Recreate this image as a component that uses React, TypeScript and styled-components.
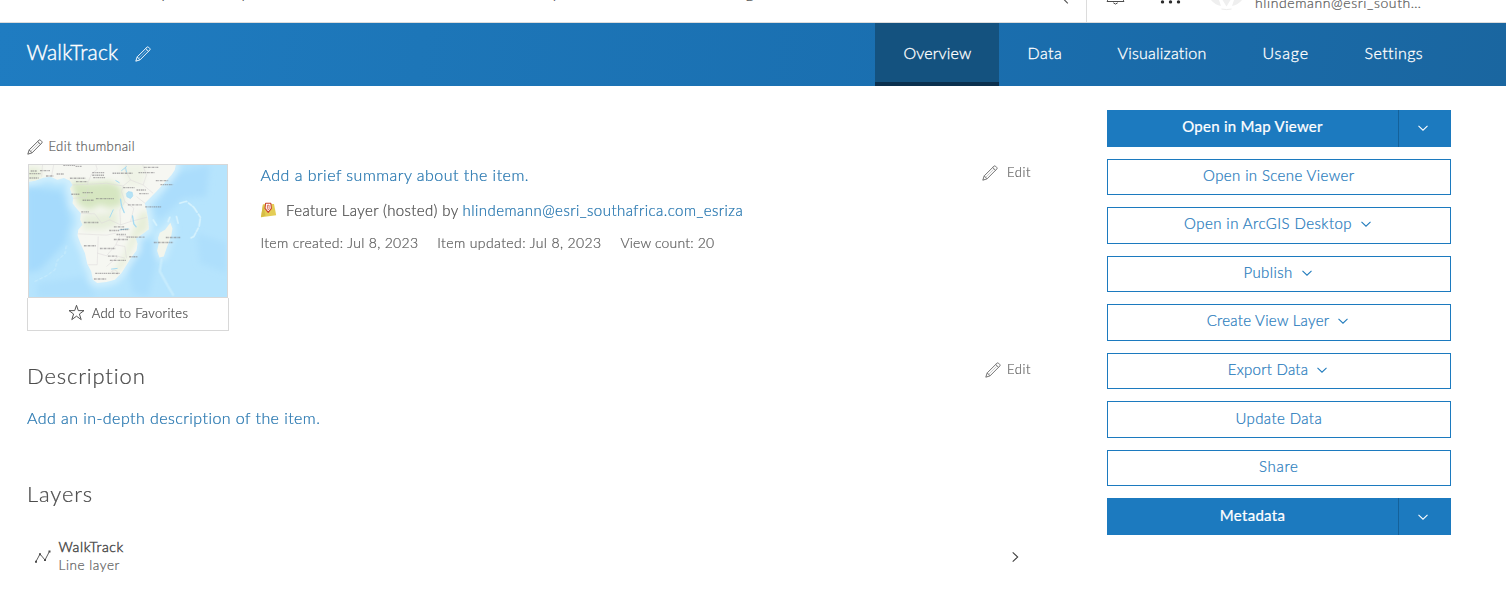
import React from "react";
import styled, { createGlobalStyle, css } from "styled-components";

const GlobalStyle = createGlobalStyle`
  *, *::before, *::after { box-sizing: border-box; }
  body {
    margin: 0;
    background: #fff;
    color: #4c4c4c;
    font-family: Lato, "Open Sans", sans-serif;
    font-weight: 300;
    -webkit-text-stroke: 0.22px currentColor;
    overflow: hidden;
  }
  svg { display: block; flex: none; }
`;

type Tracked = { $track?: number };
const tracking = css<Tracked>`
  letter-spacing: ${(p) => p.$track ?? 0.4}px;
  white-space: nowrap;
`;

/* ---------- global bar ---------- */
const Page = styled.div`
  width: 1506px;
  height: 594px;
  overflow: hidden;
`;
const GlobalBar = styled.header`
  display: flex;
  height: 23px;
  border-bottom: 1px solid #dcdcdc;
  overflow: hidden;
`;
const GlobalNav = styled.nav`
  display: flex;
  width: 1040px;
  height: 20px;
  margin-top: -16px;
  padding-left: 25px;
  line-height: 16px;
`;
const GlobalLink = styled.a<{ $width: number }>`
  flex: none;
  width: ${(p) => p.$width}px;
  font-size: 16px;
  color: #4c4c4c;
  letter-spacing: 0.3px;
`;
const SearchSlot = styled.div`
  width: 47px;
  height: 22px;
  padding-left: 21px;
  border-right: 1px solid #dcdcdc;
`;
const GlobalTools = styled.div`
  display: flex;
  align-items: flex-start;
  padding-left: 19px;
`;
const BellSlot = styled.div`width: 54px;`;
const DotsSlot = styled.div`width: 51px;`;
const AvatarSlot = styled.div`width: 44px;`;
const UserName = styled.span<Tracked>`
  ${tracking}
  margin-top: -7px;
  font-size: 14px;
  line-height: 20px;
  color: #595959;
`;

/* ---------- item header ---------- */
const ItemHeader = styled.div`
  display: flex;
  justify-content: space-between;
  height: 63px;
  padding: 0 55px 0 26.5px;
  color: #fff;
  background: linear-gradient(100deg, #1f7cc1 0%, #1d76b8 28%, #1a6fb0 60%, #1a66a0 100%);
`;
const TitleGroup = styled.div`
  display: flex;
  align-items: center;
  gap: 16.5px;
  height: 57px;
`;
const Title = styled.h1<Tracked>`
  ${tracking}
  margin: 0;
  font-size: 21px;
  font-weight: 300;
  line-height: 28px;
  -webkit-text-stroke-width: 0.4px;
`;
const PencilDrop = styled.span`padding-top: 5px;`;
const Tabs = styled.nav`display: flex;`;
const Tab = styled.a<Tracked & { $width: number; $active?: boolean }>`
  ${tracking}
  width: ${(p) => p.$width}px;
  padding-left: 28.5px;
  font-size: 16px;
  line-height: 59px;
  -webkit-text-stroke-width: 0.3px;
  ${(p) => p.$active && css`
    background: #14527f;
    border-bottom: 4px solid #0b304e;
  `}
`;

/* ---------- body ---------- */
const Body = styled.main`
  display: flex;
  justify-content: space-between;
  padding: 24px 55px 0 27px;
`;
const Content = styled.div`width: 1004px;`;
const Summary = styled.section`
  display: flex;
  padding-top: 28px;
`;
const ThumbColumn = styled.div`width: 202px;`;
const EditThumb = styled.a`
  display: flex;
  align-items: center;
  gap: 5.5px;
  height: 18px;
  margin-bottom: 8px;
  color: #5f5f5f;
`;
const SmallLabel = styled.span<Tracked>`
  ${tracking}
  font-size: 13px;
  line-height: 16px;
  padding-bottom: 2px;
`;
const ThumbFrame = styled.div`
  width: 200px;
  height: 134px;
  margin-left: 1px;
  border: 1px solid #d8d8d8;
  overflow: hidden;
`;
const Favorite = styled.button`
  display: flex;
  align-items: center;
  justify-content: center;
  gap: 7px;
  width: 202px;
  height: 33px;
  padding: 0 0 3px 0;
  border: 1px solid #d8d8d8;
  border-top: 0;
  background: #fff;
  color: #4c4c4c;
  font-family: inherit;
  font-weight: 300;
  svg { margin-bottom: 1px; }
  span { padding-bottom: 0; }
`;
const Details = styled.div`
  flex: 1;
  padding: 20px 0 0 31.5px;
`;
const linkColor = "#2374ae";
const SummaryPrompt = styled.a<Tracked>`
  ${tracking}
  display: block;
  font-size: 16px;
  line-height: 34px;
  color: ${linkColor};
`;
const TypeRow = styled.div<Tracked>`
  ${tracking}
  display: flex;
  align-items: center;
  height: 35px;
  margin-left: -1px;
  font-size: 15px;
`;
const TypeText = styled.span`margin: 0 4px 0 9.5px;`;
const OwnerLink = styled.a<Tracked>`
  ${tracking}
  color: ${linkColor};
`;
const MetaRow = styled.div`
  display: flex;
  gap: 18.8px;
  font-size: 14px;
  line-height: 31px;
  color: #5f5f5f;
`;
const MetaItem = styled.span<Tracked>`${tracking}`;
const EditLink = styled.a<{ $gap: number }>`
  display: flex;
  align-items: center;
  gap: ${(p) => p.$gap}px;
  height: 18px;
  color: #6a6a6a;
`;
const DetailsEdit = styled.div`padding-top: 26px;`;
const SectionHead = styled.div<{ $top: number }>`
  display: flex;
  justify-content: space-between;
  align-items: center;
  height: 30px;
  margin-top: ${(p) => p.$top}px;
`;
const SectionTitle = styled.h2<Tracked>`
  ${tracking}
  margin: 0;
  font-size: 22px;
  font-weight: 300;
  line-height: 30px;
`;
const HeadEdit = styled.div`margin-top: -12px;`;
const DescriptionPrompt = styled.a<Tracked>`
  ${tracking}
  display: block;
  margin-top: 16px;
  font-size: 16px;
  line-height: 22px;
  color: ${linkColor};
`;
const LayerRow = styled.div`
  display: flex;
  align-items: center;
  margin-top: 29px;
  padding: 0 12px 0 7px;
  svg { margin-top: 2px; }
`;
const LayerText = styled.div`
  flex: 1;
  padding-left: 7.5px;
  line-height: 18px;
`;
const LayerName = styled.div<Tracked>`
  ${tracking}
  font-size: 14px;
  -webkit-text-stroke-width: 0.45px;
`;
const LayerKind = styled.div<Tracked>`
  ${tracking}
  font-size: 13.5px;
  color: #5f5f5f;
`;

/* ---------- action column ---------- */
const Actions = styled.aside`
  display: flex;
  flex-direction: column;
  gap: 12px;
  width: 344px;
`;
const Action = styled.button<Tracked & { $menu?: boolean }>`
  ${tracking}
  display: flex;
  align-items: center;
  justify-content: center;
  gap: 8px;
  height: 36.55px;
  padding: 0 ${(p) => (p.$menu ? 2 : 0.5)}px 4px 0;
  border: 1px solid #1c7abf;
  background: #fff;
  color: #1f7abc;
  font-family: inherit;
  font-weight: 300;
  font-size: 15px;
  svg { margin-top: 2px; }
`;
const SplitAction = styled.div`
  display: flex;
  height: 36.55px;
  background: #1c7abf;
  color: #fff;
`;
const SplitMain = styled.button<Tracked>`
  ${tracking}
  width: 291px;
  padding: 0 0 4px;
  border: 0;
  background: none;
  color: inherit;
  font-family: inherit;
  font-weight: 400;
  font-size: 15px;
`;
const SplitMenu = styled.button`
  display: flex;
  align-items: center;
  justify-content: center;
  width: 53px;
  padding: 0 4px 0 0;
  border: 0;
  border-left: 1px solid #14619a;
  background: none;
  color: inherit;
`;

/* ---------- drawings ---------- */
const Pencil = () => (
  <svg width="16" height="16" viewBox="0 0 16 16" fill="none" stroke="currentColor" strokeWidth="0.95" strokeLinejoin="round">
    <path d="M.8 15.2 2.200 10.900 12 1.200q.8-.7 1.500 0l1.300 1.300q.7.7 0 1.500L5.100 13.800ZM2.200 10.900l2.900 2.900M10.700 2.500l2.800 2.800" />
    <path d="M3.800 12.200 11.800 4.200" strokeWidth=".35" />
  </svg>
);
const Caret = () => (
  <svg width="12" height="8" viewBox="0 0 12 8" fill="none" stroke="currentColor" strokeWidth="1.050">
    <path d="m1.500 1.800 4.500 4.400 4.500-4.400" />
  </svg>
);
const Star = () => (
  <svg width="17" height="17" viewBox="0 0 17 17" fill="none" stroke="currentColor" strokeWidth="0.95">
    <path d="m8.500 1.300 1.800 5.300h5.700l-4.600 3.400 1.800 5.600-4.700-3.400-4.700 3.400 1.800-5.600L1 6.600h5.700Z" />
  </svg>
);
const FeatureIcon = () => (
  <svg width="17" height="16" viewBox="0 0 17 16">
    <path d="M3 2.200 14 2l2.200 11.200L1 15.300Z" fill="#e4cd55" />
    <path d="m3 2.200-2 13 4.500-1.700Z" fill="#d6bd45" />
    <path d="M5.600 1.200h5.200l.6 5.200-3.200 4-3.200-4Z" fill="#fff" stroke="#c9442e" strokeWidth="1.100" strokeLinejoin="round" />
    <path d="M7.400 3.200h1.700v3.600l-.85 1-.85-1Z" fill="#fff" stroke="#d8634c" strokeWidth=".9" />
  </svg>
);
const LineIcon = () => (
  <svg width="17" height="16" viewBox="0 0 17 16" fill="none" stroke="#4c4c4c">
    <path d="m2 12.500 4-7.500 5 6L15.400 2.500" strokeWidth="0.9" />
    <g fill="#4c4c4c" stroke="none">
      <path d="M1 11.700h2v2H1zM5 4.200h2v2H5zM10 10h2v2h-2zM14.500 1.500h2v2h-2z" />
    </g>
  </svg>
);
const ChevronRight = () => (
  <svg width="8" height="12" viewBox="0 0 8 12" fill="none" stroke="#3c3c3c" strokeWidth="1.050">
    <path d="m1.700 1.400 5 4.600-5 4.600" />
  </svg>
);
const SearchTail = () => (
  <svg width="8" height="5" viewBox="0 0 8 5" fill="none" stroke="#4c4c4c" strokeWidth="1.100">
    <path d="M2-1.500 6.800 3.300" />
  </svg>
);
const BellTail = () => (
  <svg width="20" height="6" viewBox="0 0 20 6" fill="none" stroke="#4c4c4c">
    <path d="M1 .8 2.500-.5M18 .8 16.500-.5M.8 1.500h17.400M7.300 2.800q2.200 2.600 4.400 0" />
  </svg>
);
const Dots = () => (
  <svg width="22" height="5" viewBox="0 0 22 5" fill="#2b2b2b">
    <circle cx="2.500" cy="1.900" r="1.700" />
    <circle cx="10.500" cy="1.900" r="1.700" />
    <circle cx="18.500" cy="1.900" r="1.700" />
  </svg>
);
const AvatarTail = () => (
  <svg width="32" height="11" viewBox="0 0 32 11" fill="#efefef">
    <path d="M0 0h8l2 6Q4 5 0 0ZM31 0h-8l-2 6Q27 5 31 0ZM11.500 0h8l-4 6.500Z" />
    <path d="M10.500 9q5 1.200 10 0" fill="none" stroke="#ededed" />
  </svg>
);

const placeMarks: [number, number, number][] = [
  [62, 123, 18], [90, 122, 30], [58, 131, 34], [58, 144, 28], [108, 138, 22], [140, 132, 22],
  [160, 106, 36], [197, 109, 18], [247, 128, 38], [247, 136, 36], [250, 143, 36], [308, 130, 60],
  [402, 112, 44], [386, 128, 48], [180, 145, 46], [198, 155, 34], [438, 152, 38], [452, 164, 38],
  [184, 193, 26], [218, 188, 32], [340, 173, 34], [380, 180, 28], [388, 191, 28], [258, 206, 54],
  [218, 211, 34], [354, 225, 42], [406, 231, 50], [214, 246, 24], [222, 278, 44], [312, 291, 32],
  [298, 302, 30], [332, 299, 26], [320, 314, 28], [312, 329, 42], [350, 322, 54], [222, 348, 36],
  [270, 356, 46], [294, 379, 28], [300, 392, 48], [358, 381, 26], [256, 431, 74], [252, 448, 38],
  [468, 323, 44], [432, 338, 58],
];

const AfricaMap = () => (
  <svg width="198" height="132" viewBox="57 105 595 397" preserveAspectRatio="none">
    <defs>
      <filter id="soft" x="-30%" y="-30%" width="160%" height="160%"><feGaussianBlur stdDeviation="9" /></filter>
      <filter id="edge" filterUnits="userSpaceOnUse" x="40" y="90" width="630" height="430"><feGaussianBlur stdDeviation="1.300" /></filter>
      <path id="africa" d="M50 156 75 152 100 143 122 140 142 149 162 144 180 152 188 165 180 176 190 205 188 220 200 236 213 250 211 270 218 285 205 300 203 318 212 342 225 370 232 402 244 425 249 450 262 460 290 457 315 450 335 430 350 406 362 386 380 362 383 342 378 326 400 311 417 298 415 270 410 240 405 220 420 205 440 185 460 163 485 135 495 120 500 95 50 95Z" />
      <path id="island" d="m482 279 6 17-3 20-13 35-10 29-13 3-7-20 5-22-2-17 5-15 16-9Z" />
      <clipPath id="land"><use href="#africa" /></clipPath>
    </defs>
    <path d="M50 95h610v420H50z" fill="#b6e4fd" />
    <g filter="url(#soft)">
      <path d="M50 170 155 185 180 270 165 340 90 420 50 430Z" fill="#a5dafc" />
      <path d="M500 130 600 105 590 200 520 205 450 270 430 240Z" fill="#abddfc" />
      <path d="M395 330 430 330 440 400 415 500 370 490 355 420Z" fill="#acdefc" />
      <path d="M560 310 650 340 650 430 570 400ZM80 460 220 440 260 505 80 505Z" fill="#aedffc" />
      <use href="#africa" fill="none" stroke="#d6f1fd" strokeWidth="22" />
      <use href="#island" fill="none" stroke="#d0effd" strokeWidth="16" />
    </g>
    <g filter="url(#edge)" fill="none" stroke="#d8f3fd" strokeLinecap="round">
      <path d="M510 220 530 214 552 232 572 262 568 290 552 320 540 326" strokeWidth="5" strokeDasharray="22 7 11 5" />
      <path d="M475 275 480 262M505 280 500 260M430 270 440 286" strokeWidth="5" />
      <path d="M75 455 110 438 135 420 142 392 165 372 170 345" strokeWidth="2.500" strokeDasharray="9 7" opacity=".8" />
      <path d="M455 390 450 425 475 470 490 495" strokeWidth="8" opacity=".5" />
    </g>
    <g filter="url(#edge)">
      <use href="#africa" fill="#f6f7f2" />
      <use href="#island" fill="#f2f5ec" />
    </g>
    <g clipPath="url(#land)">
      <g filter="url(#soft)">
        <path d="M182 155 240 160 300 155 335 172 338 225 300 235 270 225 240 240 205 225Z" fill="#d6e6c1" />
        <path d="M50 110 95 115 90 150 50 155Z" fill="#e6eed8" />
        <path d="M215 255 290 250 320 240 325 285 280 300 220 300Z" fill="#e6eeda" />
        <path d="M390 250 415 240 417 300 385 320 340 410 300 450 345 370Z" fill="#e6eed8" />
        <path d="M330 103 410 103 400 170 350 170Z" fill="#eff3e6" />
      </g>
      <g fill="none" stroke="#ddd8da" strokeWidth="1.500">
        <path d="M180 165 232 163 245 132 262 118 255 95M232 163 290 160 340 168 362 150 345 118 352 95M190 205 228 203 235 175M213 250 255 252 275 280 300 270 332 285 330 240 345 215 335 185 340 168M205 312 290 316 318 310M265 320 262 405 235 405M262 370 290 378 318 345 345 350 350 385M318 345 330 318 380 322M332 285 362 275 372 235 345 215M362 150 400 165 430 190M400 165 410 135 395 95M362 275 412 262M380 200 408 222M125 138 132 100M95 140 98 100M290 410 325 380 345 385M305 425q10-10 18 2t-18-2" />
      </g>
      <g fill="none" stroke="#a6dbf2" strokeLinecap="round">
        <path d="M350 190 356 185 367 187 369 198 362 206 352 201Z" fill="#b4e2f6" strokeWidth="2" />
        <path d="M332 208 335 228 343 248M368 258 372 282 379 291" strokeWidth="4" />
        <path d="M335 122 350 110M347 112 350 126M330 300 355 297M300 262 310 240M305 418 322 416M318 152 328 158" strokeWidth="3" />
      </g>
    </g>
    <g filter="url(#edge)" stroke="#7d7a7e" strokeWidth="4.200" strokeDasharray="6 1.500 3 2" opacity=".58">
      {placeMarks.map(([x, y, w]) => <path key={`${x}-${y}`} d={`M${x} ${y}h${w}`} />)}
    </g>
  </svg>
);

const globalLinks: [string, number][] = [
  ["Home", 93], ["Gallery", 101], ["Map", 76], ["Scene", 90], ["Notebook", 132],
  ["Groups", 94], ["Content", 116], ["Organization", 130],
];
const tabs: [string, number, number][] = [
  ["Overview", 124, 0.17], ["Data", 90, 0.5], ["Visualization", 145, 0.23], ["Usage", 102, 0.85], ["Settings", 115, 0.43],
];
const actions: [string, number, boolean][] = [
  ["Open in Scene Viewer", 0.39, false],
  ["Open in ArcGIS Desktop", 0.44, true],
  ["Publish", 0.4, true],
  ["Create View Layer", 0.29, true],
  ["Export Data", 0.26, true],
  ["Update Data", 0.41, false],
  ["Share", 0.7, false],
];

const Split = ({ label, track }: { label: string; track: number }) => (
  <SplitAction>
    <SplitMain $track={track}>{label}</SplitMain>
    <SplitMenu aria-label={`${label} options`}><Caret /></SplitMenu>
  </SplitAction>
);

export default function App() {
  return (
    <Page>
      <GlobalStyle />
      <GlobalBar>
        <GlobalNav>
          {globalLinks.map(([label, width]) => <GlobalLink key={label} $width={width}>{label}</GlobalLink>)}
        </GlobalNav>
        <SearchSlot><SearchTail /></SearchSlot>
        <GlobalTools>
          <BellSlot><BellTail /></BellSlot>
          <DotsSlot><Dots /></DotsSlot>
          <AvatarSlot><AvatarTail /></AvatarSlot>
          <UserName $track={0.6}>hlindemann@esri_south…</UserName>
        </GlobalTools>
      </GlobalBar>

      <ItemHeader>
        <TitleGroup>
          <Title $track={0.18}>WalkTrack</Title>
          <PencilDrop><Pencil /></PencilDrop>
        </TitleGroup>
        <Tabs>
          {tabs.map(([label, width, track], i) => (
            <Tab key={label} $width={width} $track={track} $active={i === 0}>{label}</Tab>
          ))}
        </Tabs>
      </ItemHeader>

      <Body>
        <Content>
          <Summary>
            <ThumbColumn>
              <EditThumb><Pencil /><SmallLabel $track={0.4}>Edit thumbnail</SmallLabel></EditThumb>
              <ThumbFrame><AfricaMap /></ThumbFrame>
              <Favorite><Star /><SmallLabel $track={0.29}>Add to Favorites</SmallLabel></Favorite>
            </ThumbColumn>
            <Details>
              <SummaryPrompt $track={0.47}>Add a brief summary about the item.</SummaryPrompt>
              <TypeRow $track={0.36}>
                <FeatureIcon />
                <TypeText>Feature Layer (hosted) by</TypeText>
                <OwnerLink $track={0.46}>hlindemann@esri_southafrica.com_esriza</OwnerLink>
              </TypeRow>
              <MetaRow>
                <MetaItem $track={0.32}>Item created: Jul 8, 2023</MetaItem>
                <MetaItem $track={0.39}>Item updated: Jul 8, 2023</MetaItem>
                <MetaItem $track={0.16}>View count: 20</MetaItem>
              </MetaRow>
            </Details>
            <DetailsEdit>
              <EditLink $gap={9}><Pencil /><SmallLabel $track={0.6}>Edit</SmallLabel></EditLink>
            </DetailsEdit>
          </Summary>

          <SectionHead $top={30}>
            <SectionTitle $track={0.85}>Description</SectionTitle>
            <HeadEdit>
              <EditLink $gap={6}><Pencil /><SmallLabel $track={0.6}>Edit</SmallLabel></EditLink>
            </HeadEdit>
          </SectionHead>
          <DescriptionPrompt $track={0.44}>Add an in-depth description of the item.</DescriptionPrompt>

          <SectionHead $top={50}>
            <SectionTitle $track={0.85}>Layers</SectionTitle>
          </SectionHead>
          <LayerRow>
            <LineIcon />
            <LayerText>
              <LayerName $track={0.58}>WalkTrack</LayerName>
              <LayerKind $track={0.55}>Line layer</LayerKind>
            </LayerText>
            <ChevronRight />
          </LayerRow>
        </Content>

        <Actions>
          <Split label="Open in Map Viewer" track={0.27} />
          {actions.map(([label, track, menu]) => (
            <Action key={label} $track={track} $menu={menu}>{label}{menu && <Caret />}</Action>
          ))}
          <Split label="Metadata" track={0.3} />
        </Actions>
      </Body>
    </Page>
  );
}
